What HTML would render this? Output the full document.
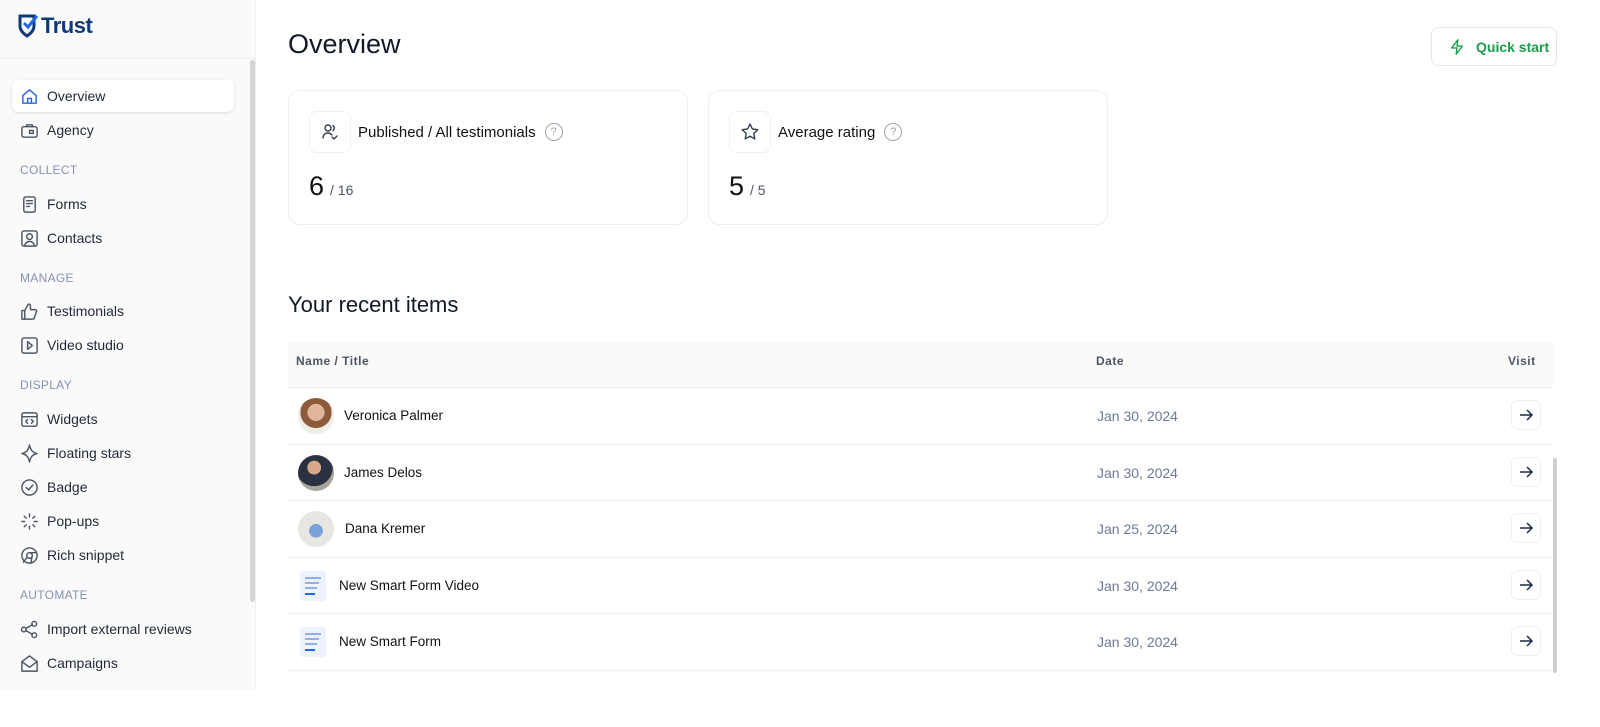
<!DOCTYPE html>
<html><head><meta charset="utf-8"><style>
*{box-sizing:border-box;margin:0;padding:0}
body{width:1600px;height:690px;overflow:hidden;font-family:"Liberation Sans",sans-serif;background:#fff;color:#111827;position:relative}
.sb{position:absolute;left:0;top:0;width:256px;height:690px;background:#fafafb;border-right:1px solid #eceef1}
.logo{height:59px;border-bottom:1px solid #eceef1;position:relative}
.logo span{position:absolute;left:41px;top:13px;font-size:22px;font-weight:700;color:#0f3a78;letter-spacing:-0.5px}
.it{position:absolute;left:12px;width:222px;height:32px;display:flex;align-items:center;font-size:14px;color:#1f2937}
.it svg{position:absolute;left:8px;width:19px;height:19px;fill:none;stroke:#4b5563;stroke-width:1.5;stroke-linecap:round;stroke-linejoin:round}
.it span{position:absolute;left:35px}
.act{background:#fff;border-radius:7px;box-shadow:0 1px 3px rgba(0,0,0,.12)}
.sec{position:absolute;left:20px;font-size:12px;color:#8391b3;letter-spacing:.3px}
.ssc{position:absolute;left:250px;top:60px;width:5px;height:542px;background:#d4d4d6;border-radius:3px}
h1{position:absolute;left:288px;top:29px;font-size:27px;font-weight:500}
.qs{position:absolute;left:1431px;top:27px;width:126px;height:39px;border:1px solid #e4e6ea;border-radius:8px;color:#1f9d4c;font-size:14px;font-weight:600;display:flex;align-items:center;padding-left:44px}
.qs svg{position:absolute;left:16px;top:10px}
.card{position:absolute;top:90px;width:400px;height:135px;border:1px solid #eceef1;border-radius:12px}
.ib{position:absolute;left:20px;top:20px;width:42px;height:42px;border:1px solid #eef0f2;border-radius:8px;display:flex;align-items:center;justify-content:center}
.ct{position:absolute;left:69px;top:20px;height:42px;display:flex;align-items:center;font-size:15px;font-weight:500;color:#111}
.q{display:inline-block;width:18px;height:18px;border:1.4px solid #9ca3af;border-radius:50%;font-size:11px;color:#9ca3af;text-align:center;line-height:16px;margin-left:9px}
.num{position:absolute;left:20px;top:80px;font-size:27px;color:#111}
.num small{font-size:14px;color:#4b5563;margin-left:6px}
h2{position:absolute;left:288px;top:292px;font-size:22px;font-weight:500}
.th{position:absolute;left:288px;top:342px;width:1265px;height:45px;background:#fafafa;font-size:12px;font-weight:700;color:#4b5563;letter-spacing:.5px}
.th span{position:absolute;top:12px}
.row{position:absolute;left:288px;width:1265px;height:57px;border-top:1px solid #e9eef5}
.row .nm{position:absolute;top:20px;font-size:13.5px;font-weight:500;color:#111}
.row .dt{position:absolute;left:809px;top:20px;font-size:14px;color:#6b7a99}
.av{position:absolute;left:10px;top:10px;width:36px;height:36px;border-radius:50%}
.doc{position:absolute;left:12px;top:13px;width:26px;height:30px;background:#edf2fc;border-radius:3px}
.doc i{position:absolute;left:5px;height:1.5px;background:#8fb0ea}
.arr{position:absolute;left:1223px;top:12px;width:30px;height:30px;border:1px solid #eef0f2;border-radius:6px;display:flex;align-items:center;justify-content:center}
.rsc{position:absolute;left:1553px;top:458px;width:4px;height:215px;background:#cfcfd1;border-radius:2px}
</style></head><body>
<div class="sb">
<div class="logo">
<svg style="position:absolute;left:17px;top:13px" width="24" height="26" viewBox="0 0 24 26"><path d="M3 3h14v10c0 5-4 8-7 10C7 21 3 18 3 13z" fill="none" stroke="#0f3a78" stroke-width="3"/><path d="M7 10l4 4 9-11" fill="none" stroke="#2563eb" stroke-width="3"/></svg>
<span>Trust</span></div>
<div class="it act" style="top:80px"><svg viewBox="0 0 20 20" style="stroke:#2563eb"><path d="M3 9l7-6 7 6v8H3z"/><path d="M8 17v-5h4v5"/></svg><span>Overview</span></div>
<div class="it" style="top:114px"><svg viewBox="0 0 20 20"><rect x="2" y="6" width="16" height="11" rx="2"/><path d="M7 6V4h6v2"/><rect x="10" y="10" width="4" height="3"/></svg><span>Agency</span></div>
<div class="sec" style="top:163px">COLLECT</div>
<div class="it" style="top:188px"><svg viewBox="0 0 20 20"><rect x="4" y="2" width="12" height="16" rx="2"/><path d="M7 6h6M7 9h6M7 12h3"/></svg><span>Forms</span></div>
<div class="it" style="top:222px"><svg viewBox="0 0 20 20"><rect x="2" y="2" width="16" height="16" rx="2"/><circle cx="10" cy="8" r="3"/><path d="M5 17c1-3 3-4 5-4s4 1 5 4"/></svg><span>Contacts</span></div>
<div class="sec" style="top:271px">MANAGE</div>
<div class="it" style="top:295px"><svg viewBox="0 0 20 20"><path d="M2 9h3v9H2zM5 9l4-7c2 0 2 2 2 3v3h5c1 0 2 1 1 3l-2 6c0 1-1 1-2 1H5"/></svg><span>Testimonials</span></div>
<div class="it" style="top:329px"><svg viewBox="0 0 20 20"><rect x="2" y="2" width="16" height="16" rx="2"/><path d="M8 6l5 4-5 4z"/></svg><span>Video studio</span></div>
<div class="sec" style="top:378px">DISPLAY</div>
<div class="it" style="top:403px"><svg viewBox="0 0 20 20"><rect x="2" y="3" width="16" height="14" rx="2"/><path d="M2 7h16M8 10l-2 2 2 2M12 10l2 2-2 2"/></svg><span>Widgets</span></div>
<div class="it" style="top:437px"><svg viewBox="0 0 20 20"><path d="M10 1c1 5 3 8 8 9-5 1-7 4-8 9-1-5-3-8-8-9 5-1 7-4 8-9z"/></svg><span>Floating stars</span></div>
<div class="it" style="top:471px"><svg viewBox="0 0 20 20"><circle cx="10" cy="10" r="8"/><path d="M6.5 10l2.5 2.5 4.5-5"/></svg><span>Badge</span></div>
<div class="it" style="top:505px"><svg viewBox="0 0 20 20"><path d="M10 2v3M10 15v3M2 10h3M15 10h3M4.5 4.5l2 2M13.5 13.5l2 2M4.5 15.5l2-2M13.5 6.5l2-2"/></svg><span>Pop-ups</span></div>
<div class="it" style="top:539px"><svg viewBox="0 0 20 20"><circle cx="10" cy="10" r="8"/><circle cx="10" cy="10" r="3"/><path d="M10 7h7M7.5 12l-4 5M12.5 12l-1 6"/></svg><span>Rich snippet</span></div>
<div class="sec" style="top:588px">AUTOMATE</div>
<div class="it" style="top:613px"><svg viewBox="0 0 20 20"><circle cx="4" cy="10" r="2.5"/><circle cx="15" cy="4" r="2.5"/><circle cx="15" cy="16" r="2.5"/><path d="M6 9l7-4M6 11l7 4"/></svg><span>Import external reviews</span></div>
<div class="it" style="top:647px"><svg viewBox="0 0 20 20"><path d="M2 8l8-6 8 6v10H2z"/><path d="M2 8l8 6 8-6"/></svg><span>Campaigns</span></div>
<div class="ssc"></div>
</div>

<h1>Overview</h1>
<div class="qs"><svg width="18" height="18" viewBox="0 0 20 20" fill="none" stroke="#1f9d4c" stroke-width="1.5" stroke-linejoin="round"><path d="M11 2L4 11h6l-1 7 7-9h-6z"/></svg>Quick start</div>

<div class="card" style="left:288px">
<div class="ib"><svg width="20" height="20" viewBox="0 0 20 20" fill="none" stroke="#374151" stroke-width="1.4" stroke-linecap="round"><circle cx="8" cy="6" r="3"/><path d="M13 3.5a3 3 0 010 5"/><path d="M3 16c0-3 2-5 5-5 2 0 3 1 4 2"/><path d="M12 15l2 2 3-3"/></svg></div>
<div class="ct">Published / All testimonials<span class="q">?</span></div>
<div class="num">6<small>/ 16</small></div></div>
<div class="card" style="left:708px">
<div class="ib"><svg width="20" height="20" viewBox="0 0 20 20" fill="none" stroke="#374151" stroke-width="1.4" stroke-linejoin="round"><path d="M10 2l2.4 5 5.4.7-4 3.8 1 5.4L10 14.3 5.2 16.9l1-5.4-4-3.8 5.4-.7z"/></svg></div>
<div class="ct">Average rating<span class="q">?</span></div>
<div class="num">5<small>/ 5</small></div></div>

<h2>Your recent items</h2>
<div class="th"><span style="left:8px">Name / Title</span><span style="left:808px">Date</span><span style="left:1220px">Visit</span></div>

<div class="row" style="top:387px"><div class="av" style="background:radial-gradient(circle at 50% 40%,#e0b59a 0 30%,#8a5a3a 31% 55%,#f2ece6 56%)"></div><div class="nm" style="left:56px">Veronica Palmer</div><div class="dt">Jan 30, 2024</div><div class="arr"><svg width="16" height="16" viewBox="0 0 16 16" fill="none" stroke="#1e2a44" stroke-width="1.5"><path d="M2 8h12M9 3l5 5-5 5"/></svg></div></div>
<div class="row" style="top:444px"><div class="av" style="background:radial-gradient(circle at 45% 35%,#d8a88a 0 22%,#2a3140 23% 60%,#a9a59c 61%)"></div><div class="nm" style="left:56px">James Delos</div><div class="dt">Jan 30, 2024</div><div class="arr"><svg width="16" height="16" viewBox="0 0 16 16" fill="none" stroke="#1e2a44" stroke-width="1.5"><path d="M2 8h12M9 3l5 5-5 5"/></svg></div></div>
<div class="row" style="top:500px"><div class="av" style="background:radial-gradient(circle at 50% 55%,#7aa2d8 0 25%,#e8e6e2 26%)"></div><div class="nm" style="left:57px">Dana Kremer</div><div class="dt">Jan 25, 2024</div><div class="arr"><svg width="16" height="16" viewBox="0 0 16 16" fill="none" stroke="#1e2a44" stroke-width="1.5"><path d="M2 8h12M9 3l5 5-5 5"/></svg></div></div>
<div class="row" style="top:557px"><div class="doc"><i style="top:6px;width:16px"></i><i style="top:11px;width:14px"></i><i style="top:16px;width:12px"></i><i style="top:22px;width:10px;background:#2563eb"></i></div><div class="nm" style="left:51px">New Smart Form Video</div><div class="dt">Jan 30, 2024</div><div class="arr"><svg width="16" height="16" viewBox="0 0 16 16" fill="none" stroke="#1e2a44" stroke-width="1.5"><path d="M2 8h12M9 3l5 5-5 5"/></svg></div></div>
<div class="row" style="top:613px"><div class="doc"><i style="top:6px;width:16px"></i><i style="top:11px;width:14px"></i><i style="top:16px;width:12px"></i><i style="top:22px;width:10px;background:#2563eb"></i></div><div class="nm" style="left:51px">New Smart Form</div><div class="dt">Jan 30, 2024</div><div class="arr"><svg width="16" height="16" viewBox="0 0 16 16" fill="none" stroke="#1e2a44" stroke-width="1.5"><path d="M2 8h12M9 3l5 5-5 5"/></svg></div></div>
<div class="row" style="top:670px"></div>
<div class="rsc"></div>
</body></html>
